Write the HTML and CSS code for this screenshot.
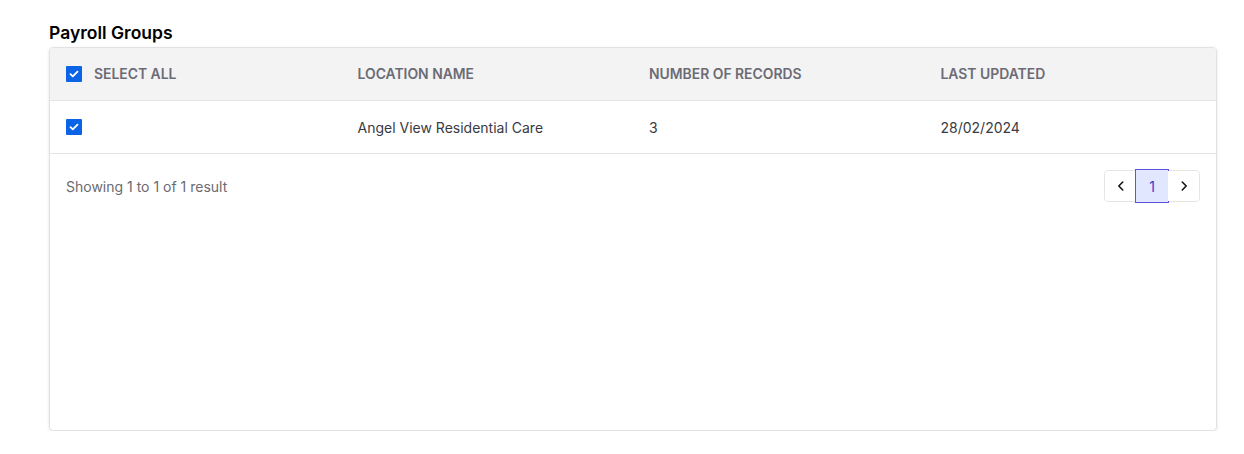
FILE: index.html
```html
<!DOCTYPE html>
<html>
<head>
<meta charset="utf-8">
<link rel="stylesheet" href="styles.css">
</head>
<body>
<div class="page">
  <h2 class="title">Payroll Groups</h2>
  <div class="card">
    <div class="row head">
      <div class="cell"><span class="cb"><svg viewBox="0 0 16 16" width="16" height="16"><path d="M4.5 8.2l2.3 2.2 4.7-4.8" fill="none" stroke="#fff" stroke-width="1.8" stroke-linecap="round" stroke-linejoin="round"/></svg></span><span>SELECT ALL</span></div>
      <div class="cell">LOCATION NAME</div>
      <div class="cell">NUMBER OF RECORDS</div>
      <div class="cell">LAST UPDATED</div>
    </div>
    <div class="row body">
      <div class="cell"><span class="cb"><svg viewBox="0 0 16 16" width="16" height="16"><path d="M4.5 8.2l2.3 2.2 4.7-4.8" fill="none" stroke="#fff" stroke-width="1.8" stroke-linecap="round" stroke-linejoin="round"/></svg></span></div>
      <div class="cell">Angel View Residential Care</div>
      <div class="cell">3</div>
      <div class="cell">28/02/2024</div>
    </div>
    <div class="footer">
      <span class="info">Showing 1 to 1 of 1 result</span>
      <div class="pager">
        <button class="pg"><svg viewBox="0 0 16 16" width="14" height="14"><path d="M10 3.5L5.5 8l4.5 4.5" fill="none" stroke="#111" stroke-width="1.8" stroke-linecap="round" stroke-linejoin="round"/></svg></button>
        <button class="pg active">1</button>
        <button class="pg"><svg viewBox="0 0 16 16" width="14" height="14"><path d="M6 3.5L10.5 8 6 12.5" fill="none" stroke="#111" stroke-width="1.8" stroke-linecap="round" stroke-linejoin="round"/></svg></button>
      </div>
    </div>
  </div>
</div>
</body>
</html>
```

FILE: styles.css
```css
html, body { margin: 0; padding: 0; background: #fff; }
body { font-family: Inter, "Noto Sans", sans-serif; color: #111827; }
.page { padding: 23px 27px 0 49px; }
.title { margin: 0 0 4px 0; font-size: 17.5px; font-weight: 600; line-height: 20px; color: #000; }
.card {
  border: 1px solid #e2e2e2;
  border-radius: 4px;
  height: 382px;
  box-shadow: 0 1px 3px rgba(0,0,0,0.12);
  overflow: hidden;
}
.row { display: grid; grid-template-columns: repeat(4, 1fr); border-bottom: 1px solid #e5e5e5; }
.row.head { background: #f3f3f3; height: 52px; }
.row.body { height: 52px; }
.cell { display: flex; align-items: center; padding-left: 16px; }
.head .cell { font-size: 13.9px; font-weight: 600; color: #6b6b75; }
.body .cell { font-size: 14px; color: #3a3a42; }
.cb {
  width: 16px; height: 16px; background: #0b63e5; border-radius: 1px;
  display: inline-flex; align-items: center; justify-content: center; margin-right: 12px;
}
.cb svg { display: block; }
.footer { display: flex; align-items: center; justify-content: space-between; padding: 16px 16px 0 16px; }
.info { font-size: 14px; color: #6b6b70; }
.pager { display: flex; border: 1px solid #e5e5e5; border-radius: 4px; height: 30px; }
.pg {
  width: 31px; height: 30px; border: none; background: #fff; padding: 0;
  display: flex; align-items: center; justify-content: center;
  font-family: Inter, sans-serif; font-size: 14px; color: #4338ca;
}
.pg:first-child { border-radius: 4px 0 0 4px; }
.pg:last-child { border-radius: 0 4px 4px 0; }
.pg.active { width: 32px; background: #e0e7ff; outline: 1px solid #5b55e0; height: 32px; margin-top: -1px; }
```
